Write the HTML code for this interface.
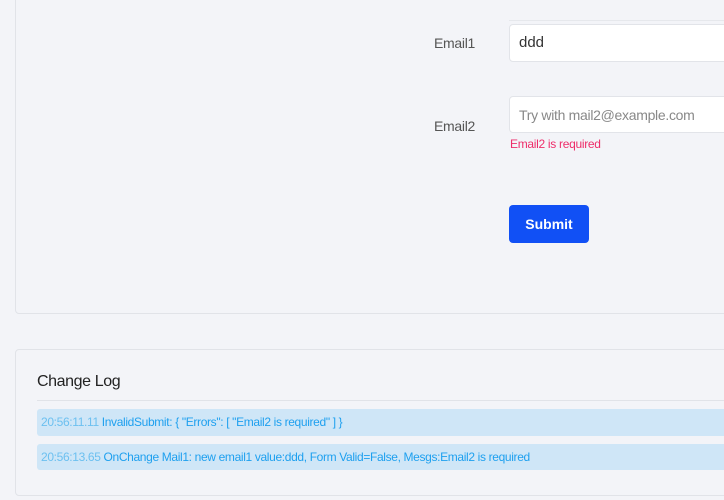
<!DOCTYPE html><html><head><style>
body{margin:0;width:724px;height:500px;background:#f3f4f8;font-family:"Liberation Sans",sans-serif;position:relative;overflow:hidden}
.card{position:absolute;left:15px;width:740px;border:1px solid #e1e3e8;border-radius:4px;background:#f3f4f8}
.lbl{position:absolute;left:434px;font-size:14px;color:#555;letter-spacing:-0.3px}
.inp{position:absolute;left:509px;width:240px;background:#fff;border:1px solid #e2e4e9;border-radius:4px;font-size:15px;line-height:36px;padding-left:9px;box-sizing:border-box;height:38px}
.row{position:absolute;left:37px;width:700px;background:#cfe6f7;border-radius:3px;font-size:12px;color:#1ea0ef;padding-left:4px;box-sizing:border-box;letter-spacing:-0.35px}
.row span{color:#6cc0f0}
</style></head><body>
<div class="card" style="top:-10px;height:322px"></div>
<div class="card" style="top:349px;height:145px"></div>
<div style="position:absolute;left:509px;top:20px;width:215px;border-top:1px solid #e6e8ec"></div>
<div class="lbl" style="top:35px">Email1</div>
<div class="inp" style="top:24px;color:#333">ddd</div>
<div class="lbl" style="top:118px">Email2</div>
<div class="inp" style="top:96px;height:37px;color:#888;font-size:14px;letter-spacing:-0.3px">Try with mail2@example.com</div>
<div style="position:absolute;left:510px;top:137px;font-size:12px;color:#ee2d6a;letter-spacing:-0.3px">Email2 is required</div>
<div style="position:absolute;left:509px;top:205px;width:80px;height:38px;background:#1150f5;border-radius:4px;color:#fff;font-weight:bold;font-size:14px;line-height:38px;text-align:center">Submit</div>
<div style="position:absolute;left:37px;top:373px;font-size:16px;color:#222;letter-spacing:-0.4px">Change Log</div>
<div style="position:absolute;left:37px;top:400px;width:700px;border-top:1px solid #e1e3e8"></div>
<div class="row" style="top:409px;height:27px;line-height:27px"><span>20:56:11.11</span> InvalidSubmit: { "Errors": [ "Email2 is required" ] }</div>
<div class="row" style="top:444px;height:26px;line-height:26px"><span>20:56:13.65</span> OnChange Mail1: new email1 value:ddd, Form Valid=False, Mesgs:Email2 is required</div>
</body></html>
